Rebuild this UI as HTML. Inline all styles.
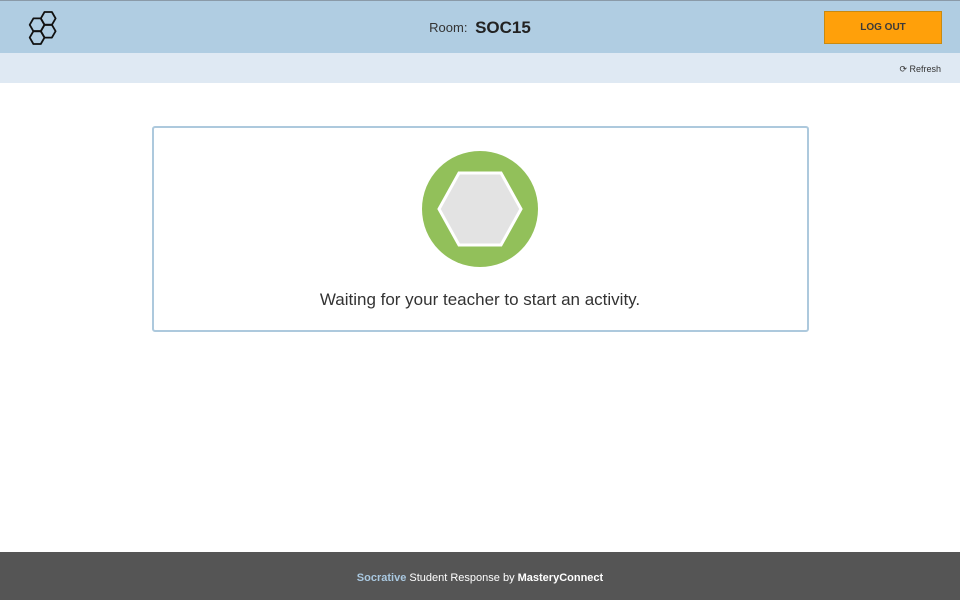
<!DOCTYPE html>
<html><head><style>
body{margin:0;width:960px;height:600px;position:relative;font-family:"Liberation Sans",sans-serif;background:#fff;overflow:hidden}
.hdr{position:absolute;top:0;left:0;width:960px;height:53px;background:#b0cde2;border-top:1px solid #8a9aa8;box-sizing:border-box}
.sub{position:absolute;top:53px;left:0;width:960px;height:30px;background:#dfe9f3}
.room{position:absolute;top:17px;left:0;width:960px;text-align:center;font-size:13px;color:#333}
.room b{font-size:17px;color:#222;margin-left:4px;vertical-align:-1px}
.btn{position:absolute;left:824px;top:10px;width:118px;height:33px;background:#ffa00a;border:1px solid #c98a10;box-sizing:border-box;text-align:center;line-height:32px;font-size:10px;font-weight:bold;color:#3a3a3a}
.ref{position:absolute;right:19px;top:64px;font-size:9px;color:#333}
.card{position:absolute;left:152px;top:126px;width:657px;height:206px;border:2px solid #adc9dd;border-radius:3px;box-sizing:border-box}
.msg{position:absolute;top:290px;left:0;width:960px;text-align:center;font-size:17px;color:#333}
.ftr{position:absolute;left:0;top:552px;width:960px;height:48px;background:#555;text-align:center;line-height:52px;font-size:11px;color:#fff}
</style></head><body>
<div class="hdr">
<svg style="position:absolute;left:0;top:0" width="70" height="52" viewBox="0 0 70 52"><g fill="none" stroke="#111" stroke-width="1.8" stroke-linejoin="round">
<polygon points="55.6,17.4 51.9,23.8 44.5,23.8 40.8,17.4 44.5,11 51.9,11"/>
<polygon points="55.6,30.2 51.9,36.6 44.5,36.6 40.8,30.2 44.5,23.8 51.9,23.8"/>
<polygon points="44.5,23.8 40.8,30.2 33.4,30.2 29.7,23.8 33.4,17.4 40.8,17.4"/>
<polygon points="44.5,36.6 40.8,43 33.4,43 29.7,36.6 33.4,30.2 40.8,30.2"/>
</g></svg>
<div class="room">Room: <b>SOC15</b></div>
<div class="btn">LOG OUT</div>
</div>
<div class="sub"></div>
<div class="ref">⟳ Refresh</div>
<div class="card"></div>
<svg style="position:absolute;left:420px;top:150px" width="120" height="120" viewBox="0 0 120 120">
<circle cx="60" cy="59" r="58" fill="#92c05a"/>
<polygon points="101,59 81,95 39,95 19,59 39,23 81,23" fill="#e3e3e3" stroke="#fff" stroke-width="3"/>
</svg>
<div class="msg">Waiting for your teacher to start an activity.</div>
<div class="ftr"><b style="color:#a9c8e0">Socrative</b> Student Response by <b>MasteryConnect</b></div>
</body></html>
